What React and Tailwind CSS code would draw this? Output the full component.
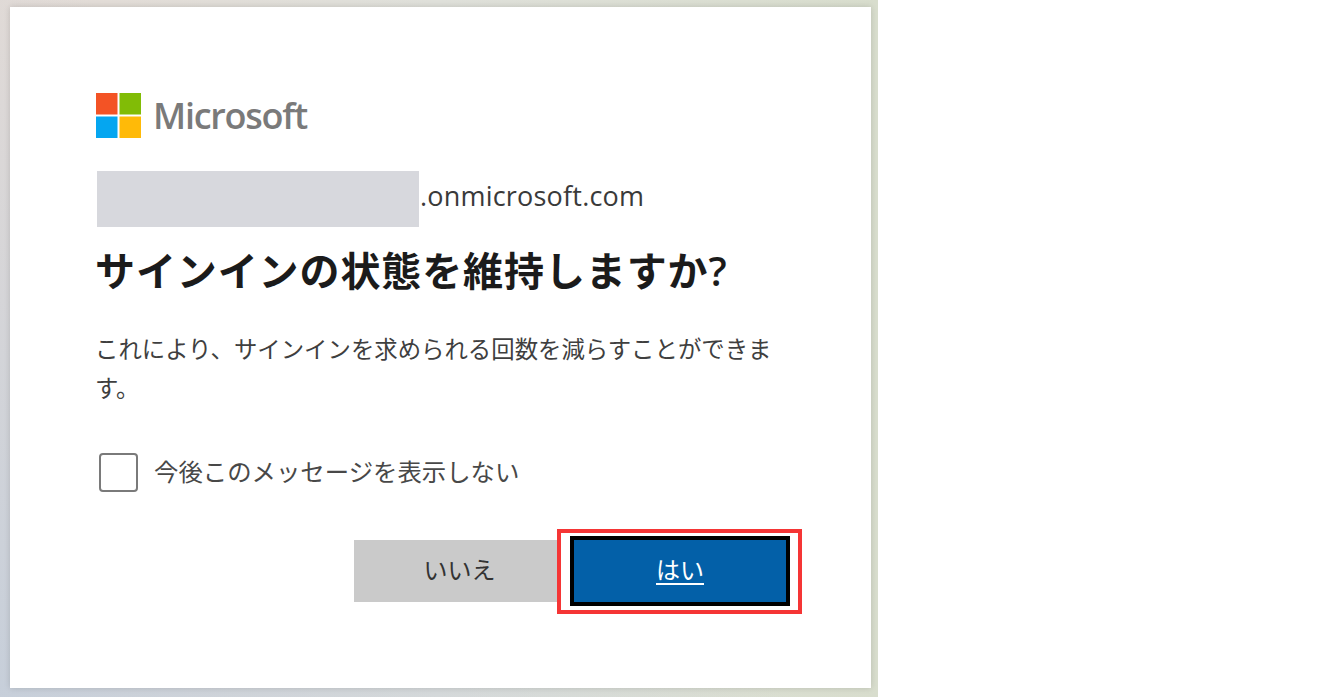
const JP = "font-['Roboto','Noto_Sans_CJK_JP',sans-serif]";

function MicrosoftLogo() {
  return (
    <div className="ml-[1px] flex h-[46px] items-center gap-[11px]">
      <svg width="46" height="46" viewBox="0 0 46 46" className="mt-[1px] shrink-0">
        <rect x="0" y="0" width="21.5" height="21.5" fill="#f35325" />
        <rect x="23.5" y="0" width="21.5" height="21.5" fill="#81bc06" />
        <rect x="0" y="23.5" width="21.5" height="21.5" fill="#05a6f0" />
        <rect x="23.5" y="23.5" width="21.5" height="21.5" fill="#ffba08" />
      </svg>
      <span className="mt-[1px] font-['Open_Sans',sans-serif] text-[36px] font-semibold leading-[46px] tracking-[-1.25px] text-[#7a7a7a]">
        Microsoft
      </span>
    </div>
  );
}

export default function App() {
  return (
    <div className="h-[697px] w-[1344px] overflow-hidden bg-white">
      <div className="h-full w-[878px] bg-[linear-gradient(45deg,rgba(197,206,218,0.95)_0%,rgba(205,212,220,0)_50%),linear-gradient(90deg,#e3dbd6_0%,#dfe0da_50%,#d8ddcd_100%)] pb-[9px] pl-[10px] pr-[7px] pt-[7px]">
        <div className={`h-full bg-white pl-[85px] pt-[85px] shadow-[0_0_6px_rgba(0,0,0,0.15)] ${JP}`}>
          <MicrosoftLogo />

          <div className="ml-[2px] mt-[33px] flex h-[56px] items-center">
            <div className="h-[56px] w-[322px] bg-[#d7d8dd]" />
            <span className="ml-[1px] -translate-y-[3px] font-['Open_Sans',sans-serif] text-[27px] leading-[56px] tracking-[0.2px] text-[#3a3a3a]">
              .onmicrosoft.com
            </span>
          </div>

          <h1 className="mt-[16px] h-[60px] text-[40px] font-bold leading-[60px] tracking-[0.9px] text-[#1b1b1b]">
            サインインの状態を維持しますか
            <span className="font-['Open_Sans',sans-serif] text-[40px] font-semibold leading-none">?</span>
          </h1>

          <p className="mt-[28px] w-[690px] text-[23.4px] leading-[39px] text-[#3f3f3f]">
            これにより、サインインを求められる回数を減らすことができます。
          </p>

          <label className="ml-[4px] mt-[44px] flex items-center gap-[16px]">
            <span className="h-[39px] w-[39px] rounded-[4px] border-2 border-[#7a7a7a] bg-white" />
            <span className="text-[24.4px] leading-[39px] text-[#484848]">今後このメッセージを表示しない</span>
          </label>

          <div className="ml-[259px] mt-[36px] flex h-[85px] items-center">
            <button className="relative h-[62px] w-[211px] bg-[#cacaca] text-[24px] text-[#333333]">いいえ</button>
            <div className="relative z-10 -ml-[8px] h-[85px] w-[245px] translate-y-[1px] border-[4px] border-[#f53535] bg-white pl-[9px] pt-[3px]">
              <button className="h-[70px] w-[220px] border-[4px] border-black bg-[#0360a8] text-[24px] text-white underline underline-offset-4">
                はい
              </button>
            </div>
          </div>
        </div>
      </div>
    </div>
  );
}
